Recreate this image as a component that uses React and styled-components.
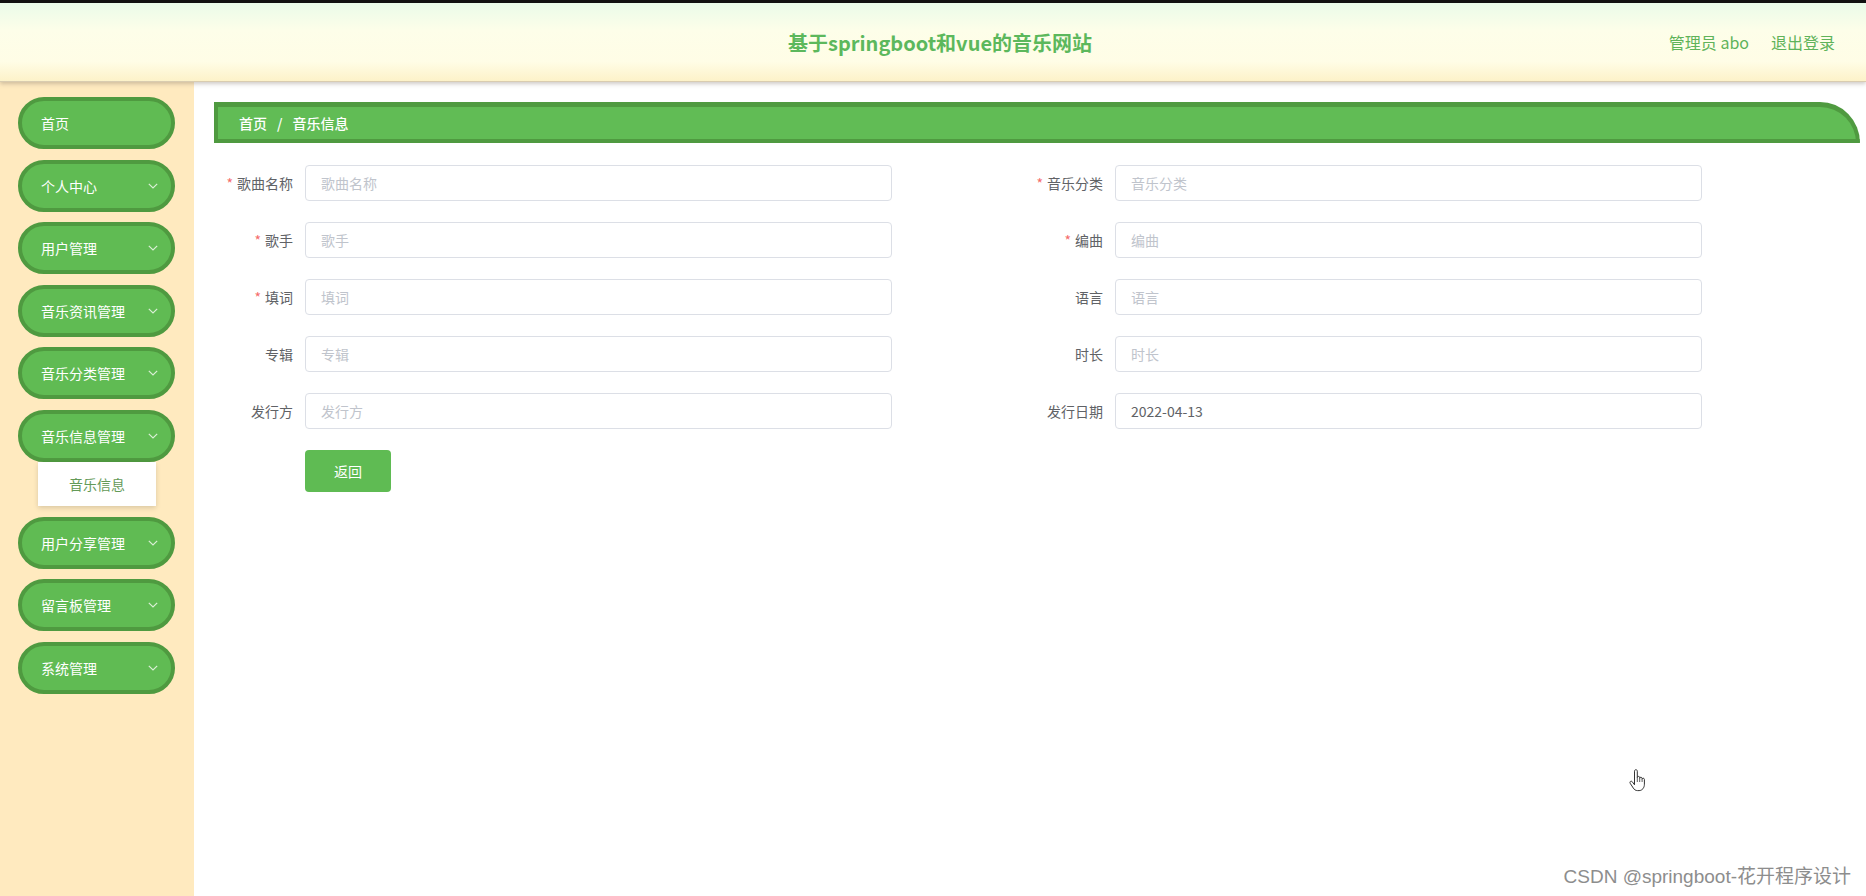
import React from "react";
import styled, { createGlobalStyle } from "styled-components";

const GlobalStyle = createGlobalStyle`
  html, body { margin: 0; padding: 0; }
  body {
    font-family: "Noto Sans CJK SC", "Noto Sans", "Liberation Sans", sans-serif;
    background: #fff;
  }
  #root { min-height: 100vh; }
  * { box-sizing: border-box; }
`;

const Page = styled.div`
  position: relative;
  display: flex;
  flex-direction: column;
  height: 100vh;
  overflow: hidden;
`;

const Header = styled.header`
  flex: 0 0 82px;
  display: flex;
  align-items: center;
  justify-content: center;
  position: relative;
  border-top: 3px solid #111;
  border-bottom: 1px solid #d9ccb0;
  background: linear-gradient(to bottom, #eafbe9 0%, #fdfee9 35%, #fffde6 75%, #fdf2c9 100%);
  box-shadow: 0 2px 4px rgba(120, 110, 100, 0.35);
  z-index: 2;
`;

const Title = styled.h1`
  margin: 0;
  font-size: 20px;
  font-weight: 700;
  color: #5cb85c;
  letter-spacing: 0;
  transform: translateX(7px);
`;

const HeaderRight = styled.div`
  position: absolute;
  right: 31px;
  top: 0;
  bottom: 0;
  display: flex;
  align-items: center;
  gap: 22px;
  font-size: 16px;
  color: #5fb35a;
`;

const Body = styled.div`
  flex: 1;
  display: flex;
  min-height: 0;
`;

const Sidebar = styled.nav`
  flex: 0 0 194px;
  background: #ffeabf;
  padding: 15px 19px 0 18px;
  display: flex;
  flex-direction: column;
  gap: 10.6px;
`;

const Group = styled.div`
  display: flex;
  flex-direction: column;
`;

const Pill = styled.div`
  height: 52px;
  border-radius: 26px;
  border: 4px solid #4f9a40;
  background: #60bb53;
  display: flex;
  align-items: center;
  justify-content: space-between;
  padding: 0 13px 0 19px;
  color: #fff;
  font-size: 14px;
`;

const Chevron = styled.svg`
  width: 10px;
  height: 6px;
  opacity: 0.9;
`;

const SubMenu = styled.div`
  margin: 0 19px 0 20px;
  height: 44px;
  background: #fff;
  box-shadow: 0 2px 5px rgba(0, 0, 0, 0.15);
  display: flex;
  align-items: center;
  justify-content: center;
  font-size: 14px;
  color: #639a58;
`;

const Main = styled.main`
  flex: 1;
  padding: 20px 6px 0 20px;
`;

const Breadcrumb = styled.div`
  height: 41px;
  background: #61bc55;
  border: 4px solid #4f9a40;
  border-top-width: 5px;
  border-top-right-radius: 40px 41px;
  display: flex;
  align-items: center;
  padding-left: 21px;
  color: #fff;
  font-size: 14px;
  font-weight: 500;
`;

const Sep = styled.span`
  margin: 0 10px;
`;

const Form = styled.form`
  margin-top: 22px;
  display: grid;
  grid-template-columns: 810px 810px;
`;

const Item = styled.div`
  display: flex;
  align-items: center;
  height: 36px;
  margin-bottom: 21px;
`;

const Label = styled.label`
  flex: 0 0 91px;
  padding-right: 12px;
  text-align: right;
  font-size: 14px;
  color: #606266;
  line-height: 36px;
  white-space: nowrap;
`;

const Star = styled.span`
  color: #f56c6c;
  margin-right: 4px;
`;

const Input = styled.input`
  width: 587px;
  height: 36px;
  border: 1px solid #dcdfe6;
  border-radius: 4px;
  padding: 0 15px;
  font-size: 14px;
  font-family: "Noto Sans CJK SC", "Liberation Sans", sans-serif;
  color: #606266;
  background: #fff;
  outline: none;
  &::placeholder { color: #c0c4cc; }
`;

const ButtonRow = styled.div`
  grid-column: 1 / -1;
  padding-left: 91px;
`;

const Button = styled.button`
  width: 86px;
  height: 42px;
  border: none;
  border-radius: 4px;
  background: #5fbb53;
  color: #fff;
  font-size: 14px;
  font-family: "Noto Sans CJK SC", sans-serif;
`;

const Cursor = styled.svg`
  position: absolute;
  left: 1629px;
  top: 769px;
  width: 17px;
  height: 23px;
`;

const Watermark = styled.div`
  position: absolute;
  right: 15px;
  bottom: 8px;
  font-family: "Liberation Sans", "Noto Sans CJK SC", sans-serif;
  font-size: 19px;
  color: #8d8d8d;
  text-shadow: 0 0 2px #fff;
`;

const menu = [
  { name: "首页", arrow: false },
  { name: "个人中心", arrow: true },
  { name: "用户管理", arrow: true },
  { name: "音乐资讯管理", arrow: true },
  { name: "音乐分类管理", arrow: true },
  { name: "音乐信息管理", arrow: true, sub: "音乐信息" },
  { name: "用户分享管理", arrow: true },
  { name: "留言板管理", arrow: true },
  { name: "系统管理", arrow: true },
];

const fields = [
  { label: "歌曲名称", req: true, ph: "歌曲名称" },
  { label: "音乐分类", req: true, ph: "音乐分类" },
  { label: "歌手", req: true, ph: "歌手" },
  { label: "编曲", req: true, ph: "编曲" },
  { label: "填词", req: true, ph: "填词" },
  { label: "语言", req: false, ph: "语言" },
  { label: "专辑", req: false, ph: "专辑" },
  { label: "时长", req: false, ph: "时长" },
  { label: "发行方", req: false, ph: "发行方" },
  { label: "发行日期", req: false, ph: "发行日期", value: "2022-04-13" },
];

export default function App() {
  return (
    <Page>
      <GlobalStyle />
      <Header>
        <Title>基于springboot和vue的音乐网站</Title>
        <HeaderRight>
          <span>管理员 abo</span>
          <span>退出登录</span>
        </HeaderRight>
      </Header>
      <Body>
        <Sidebar>
          {menu.map((m) => (
            <Group key={m.name}>
              <Pill>
                <span>{m.name}</span>
                {m.arrow && (
                  <Chevron viewBox="0 0 10 6">
                    <polyline points="0.8,0.8 5,5 9.2,0.8" fill="none" stroke="#e8f5e4" strokeWidth="1.2" />
                  </Chevron>
                )}
              </Pill>
              {m.sub && <SubMenu>{m.sub}</SubMenu>}
            </Group>
          ))}
        </Sidebar>
        <Main>
          <Breadcrumb>
            <span>首页</span>
            <Sep>/</Sep>
            <span>音乐信息</span>
          </Breadcrumb>
          <Form onSubmit={(e) => e.preventDefault()}>
            {fields.map((f) => (
              <Item key={f.label}>
                <Label>
                  {f.req && <Star>*</Star>}
                  {f.label}
                </Label>
                <Input placeholder={f.ph} defaultValue={f.value || ""} readOnly />
              </Item>
            ))}
            <ButtonRow>
              <Button type="button">返回</Button>
            </ButtonRow>
          </Form>
        </Main>
      </Body>
      <Cursor viewBox="0 0 17 23">
        <path
          d="M5.5 2.2 C5.5 1.3 6.1 0.7 6.9 0.7 C7.7 0.7 8.3 1.3 8.3 2.2 V8.6 C8.3 7.9 8.9 7.4 9.5 7.4 C10.2 7.4 10.7 7.9 10.7 8.6 V9.4 C10.7 8.7 11.3 8.2 11.9 8.2 C12.5 8.2 13.1 8.7 13.1 9.4 V10.3 C13.1 9.7 13.6 9.2 14.2 9.2 C14.8 9.2 15.4 9.7 15.4 10.3 V15.2 C15.4 18.8 13.2 21.6 10.1 21.6 H8.6 C6.6 21.6 5.3 20.6 4.3 19.1 L1.2 14.3 C0.8 13.6 0.9 12.8 1.5 12.4 C2.1 12 2.9 12.2 3.3 12.8 L5.5 15.8 Z"
          fill="#fff"
          stroke="#333"
          strokeWidth="1"
          strokeLinejoin="round"
        />
        <path d="M8.3 8.6 V13 M10.7 9.4 V13 M13.1 10.3 V13" stroke="#333" strokeWidth="0.8" fill="none" />
      </Cursor>
      <Watermark>CSDN @springboot-花开程序设计</Watermark>
    </Page>
  );
}
